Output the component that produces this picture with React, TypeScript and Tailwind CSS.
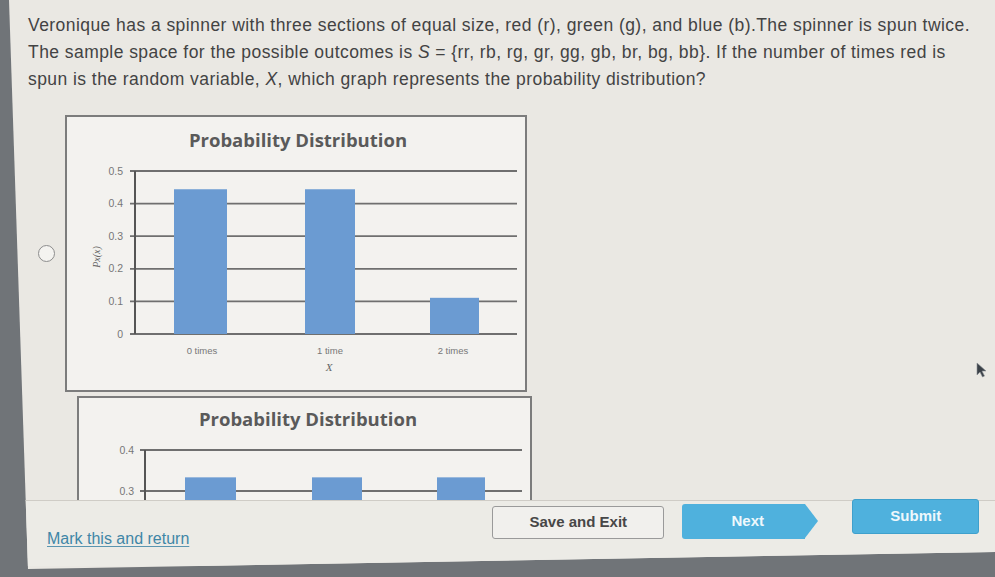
import React from "react";

const gridColor = "#6f6f6f";
const labelColor = "#777777";
const barColor = "#6b9bd2";

function Chart1() {
  const zero = 217;
  const unit = 326; // px per 1.0
  const ys = [0, 0.1, 0.2, 0.3, 0.4, 0.5];
  const bars = [
    { x: 107, w: 53, v: 0.444, label: "0 times", lx: 135 },
    { x: 238, w: 50, v: 0.444, label: "1 time", lx: 263 },
    { x: 363, w: 49, v: 0.111, label: "2 times", lx: 386 },
  ];
  return (
    <svg width="458" height="273" viewBox="0 0 458 273" className="block">
      <text x="231" y="30" textAnchor="middle" fontFamily="'Open Sans', sans-serif" fontWeight="700" fontSize="18.5" fill="#5a5a5a">
        Probability Distribution
      </text>
      {ys.map((v) => {
        const y = zero - v * unit;
        return (
          <g key={v}>
            <line x1={63} y1={y} x2={450} y2={y} stroke={gridColor} strokeWidth={v === 0 ? 2.2 : 1.8} />
            <text x="56" y={y + 3.5} textAnchor="end" fontFamily="'Liberation Sans', sans-serif" fontSize="10.5" fill={labelColor}>
              {v === 0 ? "0" : v.toFixed(1)}
            </text>
          </g>
        );
      })}
      <line x1="68" y1={zero - 0.5 * unit} x2="68" y2={zero} stroke="#555" strokeWidth="2" />
      {bars.map((b) => (
        <g key={b.label}>
          <rect x={b.x} y={zero - b.v * unit} width={b.w} height={b.v * unit} fill={barColor} />
          <text x={b.lx} y={237} textAnchor="middle" fontFamily="'Liberation Sans', sans-serif" fontSize="9.5" fill={labelColor}>
            {b.label}
          </text>
        </g>
      ))}
      <text x="262" y="254" textAnchor="middle" fontFamily="'Liberation Serif', serif" fontStyle="italic" fontSize="11" fill="#666">
        X
      </text>
      <text
        x="0"
        y="0"
        transform="translate(33 140) rotate(-90)"
        textAnchor="middle"
        fontFamily="'Liberation Serif', serif"
        fontStyle="italic"
        fontSize="10"
        fill="#666"
      >
        Px(x)
      </text>
    </svg>
  );
}

function Chart2() {
  const y03 = 93;
  const unit = 410;
  const bars = [
    { x: 106, w: 51 },
    { x: 233, w: 50 },
    { x: 358, w: 48 },
  ];
  const lines = [0.4, 0.3];
  return (
    <svg width="451" height="102" viewBox="0 0 451 102" className="block">
      <text x="229" y="28" textAnchor="middle" fontFamily="'Open Sans', sans-serif" fontWeight="700" fontSize="18.5" fill="#5a5a5a">
        Probability Distribution
      </text>
      {lines.map((v) => {
        const y = y03 - (v - 0.3) * unit;
        return (
          <g key={v}>
            <line x1="61" y1={y} x2="443" y2={y} stroke={gridColor} strokeWidth="1.8" />
            <text x="55" y={y + 3.5} textAnchor="end" fontFamily="'Liberation Sans', sans-serif" fontSize="10.5" fill={labelColor}>
              {v.toFixed(1)}
            </text>
          </g>
        );
      })}
      <line x1="66" y1={y03 - 0.1 * unit} x2="66" y2="102" stroke="#555" strokeWidth="2" />
      {bars.map((b, i) => (
        <rect key={i} x={b.x} y={y03 - 0.0333 * unit} width={b.w} height={40} fill={barColor} />
      ))}
    </svg>
  );
}

function Radio() {
  return <div className="w-[17px] h-[17px] rounded-full border-[1.5px] border-[#8c8c8c] bg-[#f4f3f0] shrink-0" />;
}

export default function App() {
  return (
    <div className="w-[995px] h-[577px] bg-[#707478] overflow-hidden relative">
      <div className="w-full h-full bg-[#eae8e3] flex flex-col [clip-path:polygon(9px_0,100%_0,100%_552px,28px_569px)]">
        {/* Question area */}
        <div className="h-[500px] overflow-hidden flex flex-col">
          <p
            className="pl-[28px] pt-[12px] text-[17.5px] leading-[27px] text-[#434343] tracking-[0.44px]"
            style={{ fontFamily: "'Liberation Sans', Arial, sans-serif" }}
          >
            Veronique has a spinner with three sections of equal size, red (r), green (g), and blue (b).The spinner is spun twice.
            <br />
            The sample space for the possible outcomes is <i>S</i> = {"{"}rr, rb, rg, gr, gg, gb, br, bg, bb{"}"}. If the number of times red is
            <br />
            spun is the random variable, <i>X</i>, which graph represents the probability distribution?
          </p>

          {/* Option 1 */}
          <div className="flex items-center mt-[22px] pl-[38px]">
            <Radio />
            <div className="ml-[10px] w-[462px] h-[277px] border-2 border-[#7c7c7c] bg-[#f3f2ef]">
              <Chart1 />
            </div>
          </div>

          {/* Option 2 */}
          <div className="flex items-start mt-[4px] pl-[77px]">
            <div className="w-[455px] h-[106px] border-2 border-b-0 border-[#7c7c7c] bg-[#f3f2ef] shrink-0 overflow-hidden">
              <Chart2 />
            </div>
          </div>
        </div>

        {/* Footer */}
        <div
          className="border-t border-[#cfccc6] bg-[#ecebe6] h-[66px] flex items-start"
          style={{ fontFamily: "'Liberation Sans', Arial, sans-serif" }}
        >
          <span className="ml-[47px] mt-[28px] leading-[20px] text-[16px] text-[#3f86a6] underline underline-offset-2 decoration-[#5a95b0]">
            Mark this and return
          </span>
          <button className="ml-[303px] mt-[5px] w-[172px] h-[33px] rounded-[3px] border border-[#9a9a9a] bg-[#f1f0ed] text-[15px] font-bold text-[#474747]">
            Save and Exit
          </button>
          <div className="ml-[18px] mt-[3px] flex h-[35px]">
            <div className="w-[123px] h-full bg-[#4fb1dd] rounded-l-[3px] flex items-center justify-center pl-[8px] text-[15px] font-bold text-[#eef8fc]">
              Next
            </div>
            <div className="w-0 h-0 border-y-[17.5px] border-y-transparent border-l-[13px] border-l-[#4fb1dd]" />
          </div>
          <button className="ml-[34px] -mt-[2px] w-[127px] h-[35px] rounded-[3px] bg-[#4fb1dd] border border-[#3fa0cc] text-[15px] font-bold text-[#eef8fc]">
            Submit
          </button>
        </div>
      </div>

      {/* mouse cursor */}
      <svg className="absolute left-[976px] top-[362px]" width="12" height="16" viewBox="0 0 12 16">
        <path d="M1 1 L1 13 L4 10 L6.5 15 L8.5 14 L6 9 L10 9 Z" fill="#3b4148" stroke="#8a8f94" strokeWidth="0.6" />
      </svg>
    </div>
  );
}
